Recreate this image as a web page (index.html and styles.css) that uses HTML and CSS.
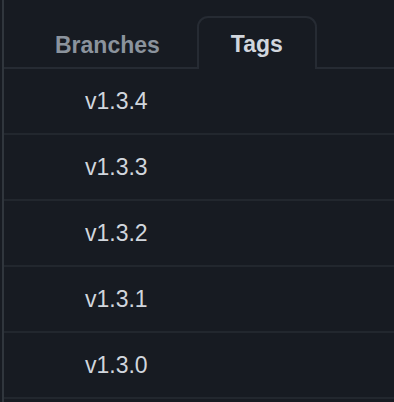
FILE: index.html
```html
<!DOCTYPE html>
<html>
<head>
<meta charset="utf-8">
<link rel="stylesheet" href="styles.css">
</head>
<body>
<div class="panel">
  <div class="tabs">
    <div class="tab">Branches</div>
    <div class="tab active">Tags</div>
  </div>
  <ul class="list">
    <li class="row">v1.3.4</li>
    <li class="row">v1.3.3</li>
    <li class="row">v1.3.2</li>
    <li class="row">v1.3.1</li>
    <li class="row">v1.3.0</li>
  </ul>
</div>
</body>
</html>
```
FILE: styles.css
```css
html, body {
  margin: 0;
  padding: 0;
  background: #171b22;
  height: 100%;
}
body {
  font-family: "Liberation Sans", Arial, sans-serif;
  overflow: hidden;
}
.panel {
  margin-left: 2px;
  border-left: 2px solid #30363d;
  min-height: 100%;
  box-sizing: border-box;
}
.tabs {
  display: flex;
  align-items: flex-end;
  gap: 2px;
  padding: 16px 0 0 16px;
  border-bottom: 2px solid #262b33;
}
.tab {
  padding: 0 33px;
  height: 49px;
  line-height: 50px;
  font-size: 23px;
  font-weight: 700;
  color: #8b939d;
  border: 2px solid transparent;
  border-bottom: none;
  margin-bottom: -2px;
}
.tab.active {
  color: #d1d6dd;
  border-color: #262b33;
  border-radius: 11px 11px 0 0;
  background: #171b22;
  padding: 0 32px;
  height: 51px;
  line-height: 52px;
}
.list {
  list-style: none;
  margin: 0;
  padding: 0;
}
.row {
  height: 64px;
  line-height: 64px;
  padding-left: 81px;
  font-size: 23px;
  color: #d1d6dd;
  border-bottom: 2px solid #22272e;
}
```
